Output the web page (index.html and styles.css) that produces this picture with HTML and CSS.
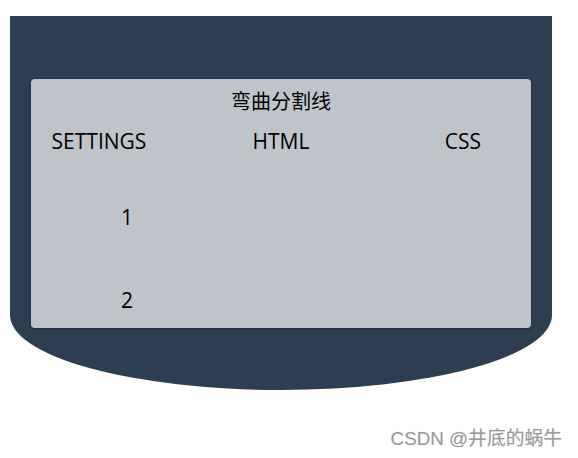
FILE: index.html
```html
<!DOCTYPE html>
<html lang="zh-CN">
<head>
<meta charset="utf-8">
<title>弯曲分割线</title>
<link rel="stylesheet" href="styles.css">
</head>
<body>
<div class="curve">
  <div class="card">
    <div class="title">弯曲分割线</div>
    <div class="table">
      <div class="th">SETTINGS</div>
      <div class="th">HTML</div>
      <div class="th">CSS</div>
      <div class="td r1">1</div>
      <div class="td r1"></div>
      <div class="td r1"></div>
      <div class="td r2">2</div>
      <div class="td r2"></div>
      <div class="td r2"></div>
    </div>
  </div>
</div>
<div class="watermark">CSDN @井底的蜗牛</div>
</body>
</html>
```
FILE: styles.css
```css
html, body {
  margin: 0;
  padding: 0;
  background: #ffffff;
  width: 578px;
  height: 458px;
  overflow: hidden;
  position: relative;
}
body {
  font-family: "Open Sans", "Noto Sans CJK SC", sans-serif;
  color: #000;
}
.curve {
  margin: 16px 0 0 10px;
  width: 542px;
  box-sizing: border-box;
  padding: 63px 21px 62px;
  background: #2c3e50;
  border-radius: 0 0 50% 50% / 0 0 75px 75px;
}
.card {
  background: #bfc4cb;
  border-radius: 4px;
  box-shadow: 0 1px 3px rgba(0, 0, 0, 0.35);
  padding: 8px 0 14px;
}
.title {
  text-align: center;
  font-size: 20px;
  line-height: 28px;
  font-family: "Noto Sans CJK SC", sans-serif;
}
.table {
  display: grid;
  grid-template-columns: 136px 228px 136px;
  margin-top: 12px;
  font-size: 21px;
  line-height: 28px;
}
.th {
  text-align: center;
}
.td {
  text-align: center;
}
.td:nth-child(3n+1) {
  padding-left: 56px;
}
.r1 {
  margin-top: 48px;
}
.r2 {
  margin-top: 55px;
}
.watermark {
  position: absolute;
  right: 16px;
  top: 427px;
  font-family: "Liberation Sans", "Noto Sans CJK SC", sans-serif;
  font-size: 18.8px;
  line-height: 24px;
  color: #9a9a9a;
  text-shadow: 0 0 1px rgba(200, 200, 200, 0.6);
}
```
